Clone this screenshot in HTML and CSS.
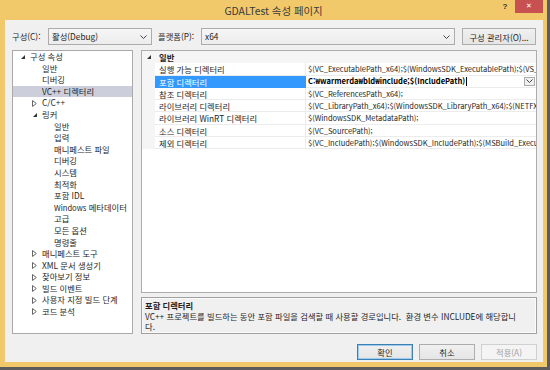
FILE: index.html
```html
<!DOCTYPE html>
<html lang="ko">
<head>
<meta charset="utf-8">
<title>GDALTest 속성 페이지</title>
<link rel="stylesheet" href="styles.css">
</head>
<body>
<div class="window">
	<div class="titlebar">
		<span></span>
		<span class="title">GDALTest 속성 페이지</span>
		<div class="controls">
			<span class="help">?</span>
			<span class="close">&#x2715;</span>
		</div>
	</div>

	<div class="client">
		<div class="toprow">
			<label class="lbl lbl-cfg">구성(C):</label>
			<div class="combo combo-cfg">
				<span>활성(Debug)</span>
				<svg class="chev" width="7" height="4" viewBox="0 0 7 4"><path d="M0.5 0.5 L3.5 3.5 L6.5 0.5" fill="none" stroke="#444" stroke-width="1"/></svg>
			</div>
			<label class="lbl lbl-plat">플랫폼(P):</label>
			<div class="combo combo-plat">
				<span>x64</span>
				<svg class="chev" width="7" height="4" viewBox="0 0 7 4"><path d="M0.5 0.5 L3.5 3.5 L6.5 0.5" fill="none" stroke="#444" stroke-width="1"/></svg>
			</div>
			<button class="btn btn-mgr">구성 관리자(O)...</button>
		</div>

		<div class="main">
			<!-- 왼쪽 트리 -->
			<ul class="tree">
				<li class="l0"><span class="tw"><i class="exp"></i></span>구성 속성</li>
				<li class="l1"><span class="tw"></span>일반</li>
				<li class="l1"><span class="tw"></span>디버깅</li>
				<li class="l1 sel"><span class="tw"></span>VC++ 디렉터리</li>
				<li class="l1"><span class="tw"><svg class="col" width="5" height="7" viewBox="0 0 5 7"><path d="M0.5 0.5 L4.3 3.5 L0.5 6.5 Z" fill="none" stroke="#666"/></svg></span>C/C++</li>
				<li class="l1"><span class="tw"><i class="exp"></i></span>링커</li>
				<li class="l2"><span class="tw"></span>일반</li>
				<li class="l2"><span class="tw"></span>입력</li>
				<li class="l2"><span class="tw"></span>매니페스트 파일</li>
				<li class="l2"><span class="tw"></span>디버깅</li>
				<li class="l2"><span class="tw"></span>시스템</li>
				<li class="l2"><span class="tw"></span>최적화</li>
				<li class="l2"><span class="tw"></span>포함 IDL</li>
				<li class="l2"><span class="tw"></span><span class="lat">Windows</span>&nbsp;메타데이터</li>
				<li class="l2"><span class="tw"></span>고급</li>
				<li class="l2"><span class="tw"></span>모든 옵션</li>
				<li class="l2"><span class="tw"></span>명령줄</li>
				<li class="l1"><span class="tw"><svg class="col" width="5" height="7" viewBox="0 0 5 7"><path d="M0.5 0.5 L4.3 3.5 L0.5 6.5 Z" fill="none" stroke="#666"/></svg></span>매니페스트 도구</li>
				<li class="l1"><span class="tw"><svg class="col" width="5" height="7" viewBox="0 0 5 7"><path d="M0.5 0.5 L4.3 3.5 L0.5 6.5 Z" fill="none" stroke="#666"/></svg></span>XML 문서 생성기</li>
				<li class="l1"><span class="tw"><svg class="col" width="5" height="7" viewBox="0 0 5 7"><path d="M0.5 0.5 L4.3 3.5 L0.5 6.5 Z" fill="none" stroke="#666"/></svg></span>찾아보기 정보</li>
				<li class="l1"><span class="tw"><svg class="col" width="5" height="7" viewBox="0 0 5 7"><path d="M0.5 0.5 L4.3 3.5 L0.5 6.5 Z" fill="none" stroke="#666"/></svg></span>빌드 이벤트</li>
				<li class="l1"><span class="tw"><svg class="col" width="5" height="7" viewBox="0 0 5 7"><path d="M0.5 0.5 L4.3 3.5 L0.5 6.5 Z" fill="none" stroke="#666"/></svg></span>사용자 지정 빌드 단계</li>
				<li class="l1"><span class="tw"><svg class="col" width="5" height="7" viewBox="0 0 5 7"><path d="M0.5 0.5 L4.3 3.5 L0.5 6.5 Z" fill="none" stroke="#666"/></svg></span>코드 분석</li>
			</ul>

			<div class="right">
				<!-- 속성 그리드 -->
				<div class="grid">
					<div class="row cat">
						<div class="gut"><i class="exp"></i></div>
						<div class="catname">일반</div>
					</div>
					<div class="row">
						<div class="gut"></div>
						<div class="name">실행 가능 디렉터리</div>
						<div class="val">$(VC_ExecutablePath_x64);$(WindowsSDK_ExecutablePath);$(VS_ExecutablePath);$(MSBuild_ExecutablePath);$(SystemRoot)₩SysWow64;$(FxCopDir);$(PATH);</div>
					</div>
					<div class="row on">
						<div class="gut"></div>
						<div class="name">포함 디렉터리</div>
						<div class="val edit">
							<span class="txt">C:₩warmerda₩bld₩include;$(IncludePath)<i class="caret"></i></span>
							<span class="dd"><svg width="7" height="4" viewBox="0 0 7 4"><path d="M0.5 0.5 L3.5 3.5 L6.5 0.5" fill="none" stroke="#444"/></svg></span>
						</div>
					</div>
					<div class="row">
						<div class="gut"></div>
						<div class="name">참조 디렉터리</div>
						<div class="val">$(VC_ReferencesPath_x64);</div>
					</div>
					<div class="row">
						<div class="gut"></div>
						<div class="name">라이브러리 디렉터리</div>
						<div class="val">$(VC_LibraryPath_x64);$(WindowsSDK_LibraryPath_x64);$(NETFXKitsDir)Lib₩um₩x64</div>
					</div>
					<div class="row">
						<div class="gut"></div>
						<div class="name">라이브러리 WinRT 디렉터리</div>
						<div class="val">$(WindowsSDK_MetadataPath);</div>
					</div>
					<div class="row">
						<div class="gut"></div>
						<div class="name">소스 디렉터리</div>
						<div class="val">$(VC_SourcePath);</div>
					</div>
					<div class="row">
						<div class="gut"></div>
						<div class="name">제외 디렉터리</div>
						<div class="val">$(VC_IncludePath);$(WindowsSDK_IncludePath);$(MSBuild_ExecutablePath);$(VC_LibraryPath_x64);</div>
					</div>
				</div>

				<!-- 설명 -->
				<div class="desc">
					<div class="desc-title">포함 디렉터리</div>
					<p>VC++ 프로젝트를 빌드하는 동안 포함 파일을 검색할 때 사용할 경로입니다.&nbsp; 환경 변수 INCLUDE에 해당합니다.</p>
				</div>
			</div>
		</div>

		<div class="buttons">
			<button class="btn def">확인</button>
			<button class="btn">취소</button>
			<button class="btn" disabled>적용(A)</button>
		</div>
	</div>
</div>
</body>
</html>
```

FILE: styles.css
```css
* {
	margin: 0;
	padding: 0;
	box-sizing: border-box;
}

body {
	background: #5c5c5c;
	font: 8.3px/1.2 "Noto Sans CJK KR", "Noto Sans", sans-serif;
	color: #1e1e1e;
}

ul {
	list-style: none;
}

/* 창 틀 */
.window {
	width: 547px;
	height: 367px;
	background: #f1c96b;
	display: flex;
	flex-direction: column;
}

.titlebar {
	height: 20px;
	display: grid;
	grid-template-columns: 1fr auto 1fr;
	align-items: start;
}

.title {
	font-size: 10.4px;
	line-height: 21px;
	color: #3a3a3a;
}

.controls {
	display: flex;
	justify-content: flex-end;
	padding-right: 4px;
}

.help {
	width: 14px;
	font: bold 8px/13px "Liberation Sans", sans-serif;
	color: #333;
	text-align: center;
	margin-right: 3px;
}

.close {
	width: 28px;
	height: 13px;
	background: #c75050;
	color: #fff;
	font: bold 7px/13px "DejaVu Sans", sans-serif;
	text-align: center;
}

.client {
	margin: 0 4px 0 5px;
	height: 342px;
	background: #f0f0f0;
	padding: 8px 6px 2px 7px;
	display: flex;
	flex-direction: column;
}

/* 윗줄 */
.toprow {
	height: 17px;
	display: flex;
	align-items: center;
}

.lbl-cfg {
	width: 36px;
}

.lbl-plat {
	width: 43px;
	margin-left: 6px;
}

.combo {
	height: 17px;
	border: 1px solid #acacac;
	background: linear-gradient(#f6f6f6, #ececec);
	display: flex;
	align-items: center;
	justify-content: space-between;
	padding: 0 4px 0 3px;
}

.combo-cfg {
	width: 104px;
}

.combo-plat {
	width: 254px;
}

.btn {
	font: inherit;
	line-height: 12px;
	color: #1e1e1e;
	height: 16px;
	border: 1px solid #adadad;
	background: linear-gradient(#f0f0f0, #e5e5e5);
}

.btn-mgr {
	width: 74px;
	height: 17px;
	margin-left: 7px;
}

/* 본문 */
.main {
	margin-top: 5px;
	height: 284px;
	display: flex;
	gap: 8px;
}

.tree {
	width: 121px;
	background: #fff;
	border: 1px solid #a9a9a9;
}

.tree li {
	height: 11.6px;
	line-height: 11.6px;
	white-space: nowrap;
	display: flex;
	align-items: center;
}

.tree .lat {
	font-size: 7.6px;
}

.tree .l0 {
	padding-left: 7px;
}

.tree .l1 {
	padding-left: 19px;
}

.tree .l2 {
	padding-left: 31px;
}

.tree .sel {
	background: #cccedb;
}

.tw {
	width: 10px;
	display: flex;
	align-items: center;
}

/* 펼친 삼각형 */
.exp {
	display: block;
	width: 0;
	height: 0;
	border-left: 4px solid transparent;
	border-bottom: 4px solid #333;
}

.tw .exp {
	margin-left: 1px;
}

.right {
	width: 396px;
	display: flex;
	flex-direction: column;
	gap: 4px;
}

.grid {
	height: 243px;
	background: #fff;
	border: 1px solid #adadad;
	overflow: hidden;
}

.row {
	height: 12.25px;
	line-height: 12.25px;
	display: grid;
	grid-template-columns: 13px 151px minmax(0, 1fr);
	white-space: nowrap;
}

.gut {
	background: #f5f5f5;
	display: flex;
	align-items: center;
	padding-left: 5px;
}

.cat {
	background: #f5f5f5;
	grid-template-columns: 13px minmax(0, 1fr);
}

.catname {
	font-weight: bold;
	padding-left: 4px;
}

.name {
	padding-left: 4px;
	border-bottom: 1px solid #ececec;
	border-right: 1px solid #ececec;
	overflow: hidden;
}

.val {
	font-size: 7.5px;
	padding-left: 2px;
	border-bottom: 1px solid #ececec;
	overflow: hidden;
}

.on .name {
	background: #3399ff;
	color: #fff;
	border-color: #3399ff;
}

.edit {
	display: flex;
	align-items: center;
	font-size: 7.6px;
	font-weight: bold;
	color: #000;
	padding-right: 1px;
}

.edit .txt {
	flex: 1;
	overflow: hidden;
	display: flex;
	align-items: center;
}

.caret {
	display: inline-block;
	width: 1px;
	height: 9px;
	background: #000;
	margin-left: 1px;
}

.dd {
	width: 11px;
	height: 9px;
	border: 1px solid #acacac;
	background: #f0f0f0;
	display: flex;
	align-items: center;
	justify-content: center;
}

.desc {
	height: 37px;
	border: 1px solid #a0a0a0;
	box-shadow: inset 0 0 0 1px #fbfbfb;
	padding: 2px 15px 2px 3px;
	line-height: 10px;
}

.desc p {
	word-break: break-all;
}

.desc-title {
	font-weight: bold;
	margin-bottom: 1px;
}

/* 아래 버튼 */
.buttons {
	margin-top: 10px;
	display: flex;
	justify-content: flex-end;
	gap: 6px;
}

.buttons .btn {
	width: 56px;
}

.btn.def {
	border-color: #3c7fb1;
	box-shadow: inset 0 0 0 1px #9ccbf0;
}

.btn:disabled {
	background: #f4f4f4;
	border-color: #d0d0d0;
	color: #a0a0a0;
}
```
